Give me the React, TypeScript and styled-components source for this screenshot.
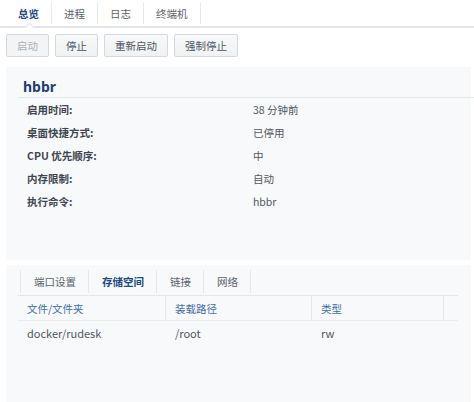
import styled, { createGlobalStyle, css } from "styled-components";

const GlobalStyle = createGlobalStyle`
  html, body {
    margin: 0;
    padding: 0;
    background: #ffffff;
  }
  body {
    font-family: "Noto Sans CJK SC", "Noto Sans", sans-serif;
    font-size: 10.5px;
    color: #4a545e;
  }
`;

const info = [
  { label: "启用时间:", value: "38 分钟前" },
  { label: "桌面快捷方式:", value: "已停用" },
  { label: "CPU 优先顺序:", value: "中" },
  { label: "内存限制:", value: "自动" },
  { label: "执行命令:", value: "hbbr" },
];

const mounts = [{ folder: "docker/rudesk", path: "/root", type: "rw" }];

const App = () => {
  return (
    <>
      <GlobalStyle />
      <Page>
        <TopTabs>
          <TopTab $active>总览</TopTab>
          <TopTab>进程</TopTab>
          <TopTab>日志</TopTab>
          <TopTab>终端机</TopTab>
        </TopTabs>
        <Toolbar>
          <Button disabled>启动</Button>
          <Button>停止</Button>
          <Button>重新启动</Button>
          <Button>强制停止</Button>
        </Toolbar>
        <Panel $height={193} $gap={10}>
          <Title>hbbr</Title>
          <InfoList>
            {info.map((row) => (
              <InfoRow key={row.label}>
                <Label>{row.label}</Label>
                <Value>{row.value}</Value>
              </InfoRow>
            ))}
          </InfoList>
        </Panel>
        <Panel $height={140} $gap={5}>
          <SubTabs>
            <SubTab $first>端口设置</SubTab>
            <SubTab $active>存储空间</SubTab>
            <SubTab>链接</SubTab>
            <SubTab>网络</SubTab>
          </SubTabs>
          <Table>
            <HeadRow>
              <HeadCell>文件/文件夹</HeadCell>
              <HeadCell>装载路径</HeadCell>
              <HeadCell>类型</HeadCell>
              <HeadCell />
            </HeadRow>
            {mounts.map((m) => (
              <BodyRow key={m.folder}>
                <Cell>{m.folder}</Cell>
                <Cell>{m.path}</Cell>
                <Cell>{m.type}</Cell>
                <Cell />
              </BodyRow>
            ))}
          </Table>
        </Panel>
      </Page>
    </>
  );
};

export default App;

const Page = styled.div`
  width: 474px;
  height: 402px;
  overflow: hidden;
`;

const TopTabs = styled.div`
  display: flex;
  height: 26px;
  padding-left: 6px;
  border-bottom: 2px solid #e3e5e9;
`;

const TopTab = styled.div<{ $active?: boolean }>`
  position: relative;
  display: flex;
  align-items: center;
  padding: 1px 12px 0;
  margin: 2px 0 2px;
  border-right: 1px solid #e8eaed;
  color: #5a646e;
  ${(p) =>
    p.$active &&
    css`
      color: #1d4a86;
      font-weight: bold;
      &::after {
        content: "";
        position: absolute;
        left: 50%;
        bottom: -7px;
        width: 6px;
        height: 6px;
        margin-left: -3px;
        background: #ffffff;
        border-left: 1px solid #e3e5e9;
        border-top: 1px solid #e3e5e9;
        transform: rotate(45deg);
      }
    `}
`;

const Toolbar = styled.div`
  display: flex;
  gap: 6px;
  padding: 6px 0 0 6px;
`;

const Button = styled.button`
  height: 23px;
  padding: 0 10px;
  border: 1px solid #d5d9de;
  border-radius: 2px;
  background: linear-gradient(#f8f9fa, #eff1f4);
  font-family: inherit;
  font-size: 10.5px;
  color: #4b5661;

  &:disabled {
    color: #a9b1ba;
    background: #f3f4f6;
  }
`;

const Panel = styled.div<{ $height: number; $gap: number }>`
  margin: ${(p) => p.$gap}px 3px 0 6px;
  height: ${(p) => p.$height}px;
  background: #f8f9fb;
`;

const Title = styled.div`
  margin: 0 -3px 0 12px;
  height: 29px;
  padding-left: 5px;
  display: flex;
  align-items: flex-end;
  padding-bottom: 1px;
  border-bottom: 1px solid #e3e6ea;
  font-family: "Noto Sans", sans-serif;
  font-size: 14px;
  font-weight: bold;
  color: #1e3f6f;
`;

const InfoList = styled.div`
  display: flex;
  flex-direction: column;
  padding-left: 21px;
`;

const InfoRow = styled.div`
  display: grid;
  grid-template-columns: 226px 1fr;
  height: 23px;
  align-items: center;
`;

const Label = styled.span`
  font-weight: bold;
  color: #3e4751;
`;

const Value = styled.span`
  color: #4f5862;
`;

const SubTabs = styled.div`
  display: flex;
  height: 25px;
  margin: 0 13px 0 12px;
  padding-top: 5px;
  border-bottom: 1px solid #e3e6ea;
`;

const SubTab = styled.div<{ $active?: boolean; $first?: boolean }>`
  display: flex;
  align-items: center;
  padding: 0 12px 0 13px;
  margin-bottom: 2px;
  border-right: 1px solid #e6e8ec;
  color: #58626c;
  ${(p) =>
    p.$first &&
    css`
      margin-left: 2px;
      border-left: 1px solid #e6e8ec;
    `}
  ${(p) =>
    p.$active &&
    css`
      color: #1d4a86;
      font-weight: bold;
    `}
`;

const Table = styled.div`
  margin: 0 13px 0 12px;
  display: flex;
  flex-direction: column;
`;

const columns = "148px 146px 132px 1fr";

const HeadRow = styled.div`
  display: grid;
  grid-template-columns: ${columns};
  height: 24px;
  border-bottom: 1px solid #eaecf0;
`;

const HeadCell = styled.div`
  display: flex;
  align-items: center;
  padding-left: 9px;
  color: #3f6ea8;
  border-right: 1px solid #e6e8ec;
  &:last-child {
    border-right: none;
  }
`;

const BodyRow = styled.div`
  display: grid;
  grid-template-columns: ${columns};
  height: 24px;
`;

const Cell = styled.div`
  display: flex;
  align-items: center;
  padding-left: 9px;
  color: #4f5862;
  font-size: 11px;
`;
